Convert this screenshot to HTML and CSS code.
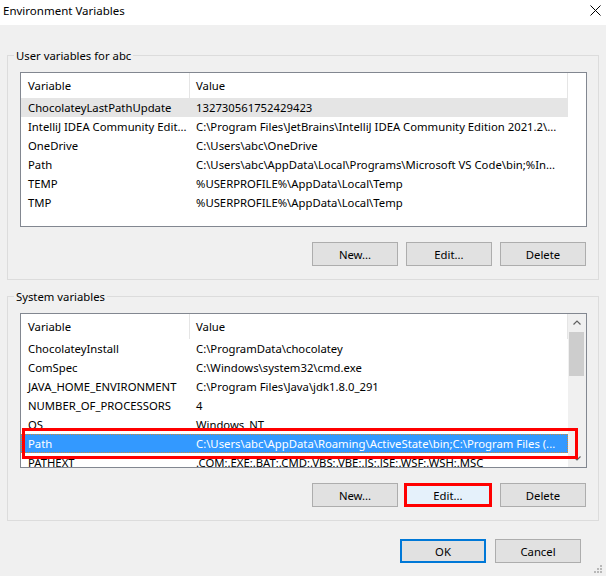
FILE: index.html
```html
<!DOCTYPE html>
<html lang="en">
<head>
  <meta charset="UTF-8" />
  <title>Environment Variables</title>
  <link rel="stylesheet" href="styles.css">
</head>
<body>
  <div class="window">
    <div class="titlebar">
      <span class="title">Environment Variables</span>
      <svg class="close" width="11" height="11" viewBox="0 0 11 11">
        <path d="M0.5 0.5 L10.5 10.5 M10.5 0.5 L0.5 10.5" stroke="#000" stroke-width="1" fill="none" />
      </svg>
    </div>

    <div class="content">
      <fieldset class="group">
        <legend>User variables for abc</legend>
        <div class="listview">
          <div class="lv-rows">
            <div class="row head">
              <span class="cell name">Variable</span>
              <span class="cell value">Value</span>
            </div>
            <div class="row sel-gray">
              <span class="cell name">ChocolateyLastPathUpdate</span>
              <span class="cell value">132730561752429423</span>
            </div>
            <div class="row">
              <span class="cell name">IntelliJ IDEA Community Edit...</span>
              <span class="cell value">C:\Program Files\JetBrains\IntelliJ IDEA Community Edition 2021.2\...</span>
            </div>
            <div class="row">
              <span class="cell name">OneDrive</span>
              <span class="cell value">C:\Users\abc\OneDrive</span>
            </div>
            <div class="row">
              <span class="cell name">Path</span>
              <span class="cell value">C:\Users\abc\AppData\Local\Programs\Microsoft VS Code\bin;%In...</span>
            </div>
            <div class="row">
              <span class="cell name">TEMP</span>
              <span class="cell value">%USERPROFILE%\AppData\Local\Temp</span>
            </div>
            <div class="row">
              <span class="cell name">TMP</span>
              <span class="cell value">%USERPROFILE%\AppData\Local\Temp</span>
            </div>
          </div>
          <div class="lv-gutter"></div>
        </div>
        <div class="btn-row">
          <button class="btn">New...</button>
          <button class="btn">Edit...</button>
          <button class="btn">Delete</button>
        </div>
      </fieldset>

      <fieldset class="group system">
        <legend>System variables</legend>
        <div class="listview">
          <div class="lv-rows">
            <div class="row head">
              <span class="cell name">Variable</span>
              <span class="cell value">Value</span>
            </div>
            <div class="row">
              <span class="cell name">ChocolateyInstall</span>
              <span class="cell value">C:\ProgramData\chocolatey</span>
            </div>
            <div class="row">
              <span class="cell name">ComSpec</span>
              <span class="cell value">C:\Windows\system32\cmd.exe</span>
            </div>
            <div class="row">
              <span class="cell name">JAVA_HOME_ENVIRONMENT</span>
              <span class="cell value">C:\Program Files\Java\jdk1.8.0_291</span>
            </div>
            <div class="row">
              <span class="cell name">NUMBER_OF_PROCESSORS</span>
              <span class="cell value">4</span>
            </div>
            <div class="row">
              <span class="cell name">OS</span>
              <span class="cell value">Windows_NT</span>
            </div>
            <div class="row sel-blue">
              <span class="cell name">Path</span>
              <span class="cell value">C:\Users\abc\AppData\Roaming\ActiveState\bin;C:\Program Files (...</span>
            </div>
            <div class="row">
              <span class="cell name">PATHEXT</span>
              <span class="cell value">.COM;.EXE;.BAT;.CMD;.VBS;.VBE;.JS;.JSE;.WSF;.WSH;.MSC</span>
            </div>
          </div>
          <div class="scrollbar">
            <div class="sb-arrow">
              <svg width="8" height="5" viewBox="0 0 8 5"><path d="M0.5 4.5 L4 1 L7.5 4.5" stroke="#606060" stroke-width="1.2" fill="none" /></svg>
            </div>
            <div class="sb-track">
              <div class="sb-thumb"></div>
            </div>
            <div class="sb-arrow">
              <svg width="8" height="5" viewBox="0 0 8 5"><path d="M0.5 0.5 L4 4 L7.5 0.5" stroke="#606060" stroke-width="1.2" fill="none" /></svg>
            </div>
          </div>
          <div class="mark-row"></div>
        </div>
        <div class="btn-row">
          <button class="btn">New...</button>
          <button class="btn focus-edit">Edit...</button>
          <button class="btn">Delete</button>
        </div>
      </fieldset>

      <div class="dialog-buttons">
        <button class="btn default">OK</button>
        <button class="btn">Cancel</button>
      </div>
    </div>

    <svg class="grip" width="8" height="8" viewBox="0 0 8 8">
      <rect x="6" y="0" width="2" height="2" fill="#b8b8b8" />
      <rect x="3" y="3" width="2" height="2" fill="#b8b8b8" />
      <rect x="6" y="3" width="2" height="2" fill="#b8b8b8" />
      <rect x="0" y="6" width="2" height="2" fill="#b8b8b8" />
      <rect x="3" y="6" width="2" height="2" fill="#b8b8b8" />
      <rect x="6" y="6" width="2" height="2" fill="#b8b8b8" />
    </svg>
  </div>
</body>
</html>
```

FILE: styles.css
```css
* {
  box-sizing: border-box;
}

body {
  margin: 0;
  background: #f0f0f0;
  font-family: "Noto Sans", "Open Sans", sans-serif;
  font-size: 11.3px;
  color: #000;
}

.window {
  position: relative;
  width: 606px;
  height: 576px;
  overflow: hidden;
  background: #f0f0f0;
}

/* title bar */

.titlebar {
  height: 25px;
  background: #fff;
  display: flex;
  align-items: center;
  justify-content: space-between;
  padding: 0 5px 3px 3px;
}

.title {
  font-size: 11.5px;
  line-height: 16px;
}

.close {
  display: block;
  margin-top: -2px;
}

/* body */

.content {
  padding: 23px 7px 0 7px;
}

.group {
  margin: 0;
  border: 1px solid #dcdcdc;
  padding: 9px 11px 13px 12px;
  min-width: 0;
}

.group legend {
  margin-left: -6px;
  padding: 0 2px;
  line-height: 15px;
}

.group.system {
  margin-top: 9px;
}

/* list view */

.listview {
  position: relative;
  display: flex;
  height: 155px;
  border: 1px solid #828790;
  background: #fff;
  overflow: hidden;
}

.lv-rows {
  width: 547px;
  flex: none;
}

.lv-gutter {
  flex: 1;
}

.row {
  display: flex;
  height: 19px;
  line-height: 19px;
  white-space: nowrap;
}

.row.head {
  height: 25px;
  line-height: 25px;
}

.row.head .cell {
  border-right: 1px solid #e5e5e5;
}

.cell {
  overflow: hidden;
}

.cell.name {
  width: 169px;
  flex: none;
  padding-left: 7px;
}

.cell.value {
  flex: 1;
  padding-left: 6px;
}

.sel-gray {
  background: #e5e5e5;
}

.sel-blue {
  background: #3399ff;
  color: #fff;
  outline: 1px dotted #d08a3a;
  outline-offset: -1px;
}

/* red marker drawn over the selected row */
.mark-row {
  position: absolute;
  left: 1px;
  top: 114px;
  width: 556px;
  height: 31px;
  border: 3px solid #f00;
}

/* scrollbar */

.scrollbar {
  flex: 1;
  display: flex;
  flex-direction: column;
  background: #f0f0f0;
  padding-right: 1px;
}

.sb-arrow {
  height: 17px;
  display: flex;
  align-items: center;
  justify-content: center;
}

.sb-track {
  flex: 1;
}

.sb-thumb {
  height: 44px;
  margin: 1px 1px 0 1px;
  background: #cdcdcd;
}

/* buttons */

.btn-row {
  display: flex;
  justify-content: flex-end;
  gap: 8px;
  margin-top: 15px;
  margin-right: 1px;
}

.btn {
  width: 86px;
  height: 24px;
  padding: 0;
  background: #e1e1e1;
  border: 1px solid #adadad;
  font-family: inherit;
  font-size: 11.3px;
  color: #000;
}

.btn.focus-edit {
  width: 88px;
  margin-left: -2px;
  background: #e5f1fb;
  border: 3px solid #f00;
}

.dialog-buttons {
  display: flex;
  justify-content: flex-end;
  gap: 9px;
  margin-top: 18px;
  padding-right: 18px;
}

.btn.default {
  border: 2px solid #0078d7;
}

.grip {
  position: absolute;
  right: 4px;
  bottom: 3px;
}
```
